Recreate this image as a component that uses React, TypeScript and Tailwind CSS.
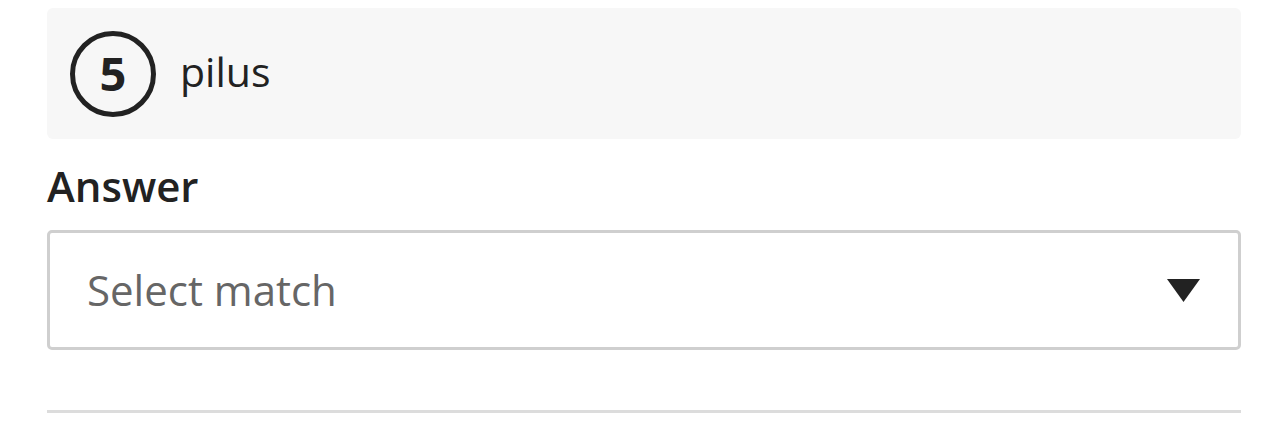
import React from 'react';

const App: React.FC = () => {
  return (
    <div
      className="w-[1278px] h-[431px] bg-white overflow-hidden"
      style={{ fontFamily: '"Open Sans", "Liberation Sans", sans-serif' }}
    >
      <div className="ml-[47px] w-[1194px] pt-[8px]">
        {/* question item */}
        <div className="h-[131px] rounded-[6px] bg-[#f7f7f7] flex items-center pl-[23px] gap-[24px]">
          <div className="w-[86px] h-[86px] rounded-full border-[5px] border-[#222] flex items-center justify-center">
            <span className="text-[47px] font-bold text-[#222] leading-none">5</span>
          </div>
          <span className="text-[41px] text-[#222] leading-none pb-[4px]">pilus</span>
        </div>

        {/* answer */}
        <div className="mt-[18px] text-[42px] font-semibold text-[#222] leading-[58px]">Answer</div>

        <div className="mt-[15px] h-[120px] rounded-[5px] border-[3px] border-[#cfcfcf] flex items-center justify-between pl-[37px] pr-[38px]">
          <span className="text-[42px] text-[#666] leading-none">Select match</span>
          <svg width="33" height="23" viewBox="0 0 33 23">
            <polygon points="0,0 33,0 16.5,23" fill="#222" />
          </svg>
        </div>

        <div className="mt-[60px] h-[3px] bg-[#dcdcdc]" />
      </div>
    </div>
  );
};

export default App;
